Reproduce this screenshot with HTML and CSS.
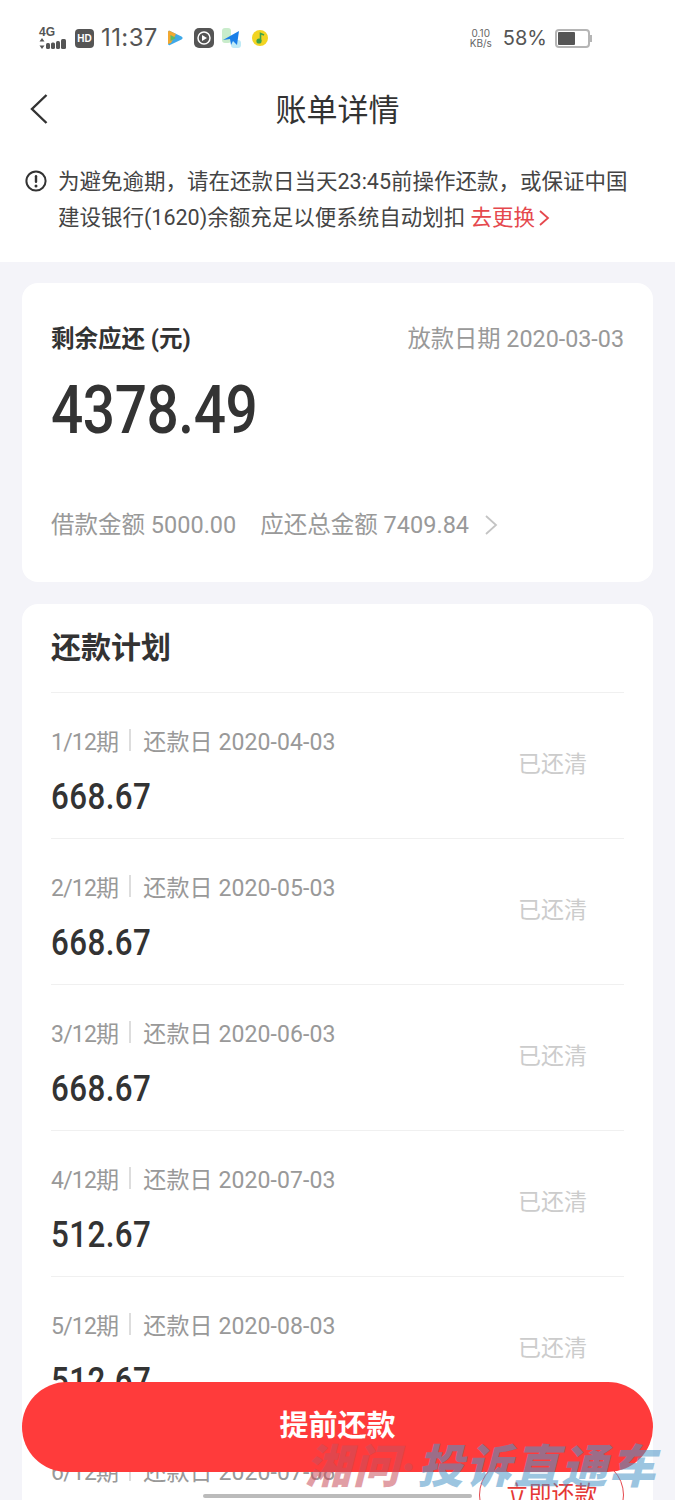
FILE: index.html
```html
<!DOCTYPE html>
<html lang="zh-CN">
<head>
<meta charset="utf-8">
<title>账单详情</title>
<link rel="stylesheet" href="styles.css">
</head>
<body>
<div class="page">
  <div class="top">
    <div class="status">
      <div class="status-left">
        <div class="signal">
          <span class="net">4G</span>
          <svg class="bars" width="30" height="11" viewBox="0 0 30 11"><path d="M3 0l2.500 3.500h-5zM3 11 .5 7.500h5z" fill="#555"/><rect x="7" y="5" width="4" height="6" rx="1.500" fill="#555"/><rect x="12" y="4.500" width="4" height="6.500" rx="1.500" fill="#555"/><rect x="17" y="3" width="4" height="8" rx="1.500" fill="#555"/><rect x="22" y="1" width="5" height="10" rx="1.500" fill="#555"/></svg>
        </div>
        <span class="hd">HD</span>
        <span class="time">11:37</span>
        <svg class="app a1" width="16" height="16" viewBox="0 0 16 16"><path d="M1 2.500C1 1 2 .5 3 1l11.500 5.500c1.500.8 1.500 2.200 0 3L3 15c-1 .5-2 0-2-1.500z" fill="#3fa9e8"/><path d="M1 2.500C1 1 2 .5 3 1l6 3-5 9-3 1z" fill="#f2a830"/><path d="M3.500 5 9 8l-5.500 3z" fill="#5dbb63"/></svg>
        <svg class="app a2" width="20" height="20" viewBox="0 0 20 20"><rect width="20" height="20" rx="5" fill="#555"/><circle cx="10" cy="10" r="6" fill="none" stroke="#fff" stroke-width="1.500"/><path d="M8 7l5 3-5 3z" fill="#fff"/></svg>
        <svg class="app a3" width="20" height="20" viewBox="0 0 20 20"><rect x="0" y="0" width="9" height="15" rx="3" fill="#c9eccb"/><rect x="9" y="12" width="10" height="8" rx="3" fill="#bfeaf6"/><path d="M1 12 17 3l-2 14-4-4-2 4-1-6z" fill="#1a7fe8"/></svg>
        <svg class="app a4" width="16" height="16" viewBox="0 0 16 16"><circle cx="8" cy="8" r="8" fill="#f2d422"/><circle cx="7" cy="11" r="2.600" fill="#3fa34d"/><path d="M8.500 11V3.500l3.500 1.500" fill="none" stroke="#3fa34d" stroke-width="1.600"/></svg>
      </div>
      <div class="status-right">
        <div class="speed"><span>0.10</span><span>KB/s</span></div>
        <span class="pct">58%</span>
        <div class="battery"><div class="battery-fill"></div></div>
      </div>
    </div>
    <div class="nav">
      <svg class="back" width="20" height="32" viewBox="0 0 20 32"><path d="M17.500 2 3 16l14.500 14" fill="none" stroke="#333" stroke-width="2.400"/></svg>
      <h1 class="title">账单详情</h1>
    </div>
    <div class="notice">
      <svg class="notice-icon" width="24" height="24" viewBox="0 0 24 24"><circle cx="12" cy="12" r="9.600" fill="none" stroke="#333" stroke-width="2"/><rect x="10.800" y="6" width="2.400" height="8" rx="1.200" fill="#333"/><circle cx="12" cy="17" r="1.500" fill="#333"/></svg>
      <p class="notice-text">为避免逾期，请在还款日当天23:45前操作还款，或保证中国建设银行(1620)余额充足以便系统自动划扣 <span class="link">去更换<svg class="link-arrow" width="12" height="18" viewBox="0 0 12 18"><path d="M2 2l8 7-8 7" fill="none" stroke="#e5484d" stroke-width="1.800"/></svg></span></p>
    </div>
  </div>

  <div class="content">
    <section class="card summary">
      <div class="summary-head">
        <span class="remain">剩余应还 (元)</span>
        <span class="date">放款日期 2020-03-03</span>
      </div>
      <div class="amount">4378.49</div>
      <div class="summary-foot">
        <span>借款金额 5000.00</span>
        <span>应还总金额 7409.84</span>
        <svg class="foot-arrow" width="14" height="22" viewBox="0 0 14 22"><path d="M2 2l10 9-10 9" fill="none" stroke="#c4c4c4" stroke-width="1.800"/></svg>
      </div>
    </section>

    <section class="card plan">
      <h2 class="plan-title">还款计划</h2>
      <div class="row">
        <div class="row-main"><div class="row-info"><span class="term">1/12期</span><i class="sep"></i><span>还款日 2020-04-03</span></div><div class="row-amount">668.67</div></div>
        <span class="paid">已还清</span>
      </div>
      <div class="row">
        <div class="row-main"><div class="row-info"><span class="term">2/12期</span><i class="sep"></i><span>还款日 2020-05-03</span></div><div class="row-amount">668.67</div></div>
        <span class="paid">已还清</span>
      </div>
      <div class="row">
        <div class="row-main"><div class="row-info"><span class="term">3/12期</span><i class="sep"></i><span>还款日 2020-06-03</span></div><div class="row-amount">668.67</div></div>
        <span class="paid">已还清</span>
      </div>
      <div class="row">
        <div class="row-main"><div class="row-info"><span class="term">4/12期</span><i class="sep"></i><span>还款日 2020-07-03</span></div><div class="row-amount">512.67</div></div>
        <span class="paid">已还清</span>
      </div>
      <div class="row">
        <div class="row-main"><div class="row-info"><span class="term">5/12期</span><i class="sep"></i><span>还款日 2020-08-03</span></div><div class="row-amount">512.67</div></div>
        <span class="paid">已还清</span>
      </div>
      <div class="row">
        <div class="row-main"><div class="row-info"><span class="term">6/12期</span><i class="sep"></i><span>还款日 2020-07-08</span></div></div>
        <span class="pay">立即还款</span>
      </div>
    </section>
  </div>

  <button class="prepay">提前还款</button>
  <div class="watermark"><span class="wm-red">湘问·</span><span class="wm-blue">投诉直通车</span></div>
  <div class="home-bar"></div>
</div>
</body>
</html>
```
FILE: styles.css
```css
* { box-sizing: border-box; }
html, body { margin: 0; padding: 0; }
body {
  width: 675px;
  height: 1500px;
  overflow: hidden;
  font-family: "Roboto", "Noto Sans CJK SC", sans-serif;
  color: #333;
  background: #f4f4f9;
}
.page { position: relative; width: 675px; height: 1500px; overflow: hidden; }
.top { background: #fff; height: 262px; }
.status {
  height: 76px;
  padding: 0 85px 0 39px;
  display: flex;
  justify-content: space-between;
  align-items: center;
}
.status-left, .status-right { display: flex; align-items: center; }
.signal { width: 31px; display: flex; flex-direction: column; align-items: flex-start; }
.net { font: 700 12px/11px "Liberation Sans", sans-serif; color: #555; }
.bars { display: block; margin-top: 0; }
.hd {
  margin-left: 5px;
  width: 19px; height: 19px;
  border-radius: 4px;
  background: #555; color: #fff;
  font: 700 10px/19px "Liberation Sans", sans-serif;
  text-align: center;
}
.time { margin-left: 7px; font: 400 24px/28px "Inter", sans-serif; letter-spacing: 0.4px; color: #555; }
.a1 { margin-left: 9px; }
.a2 { margin-left: 11px; }
.a3 { margin-left: 8px; }
.a4 { margin-left: 10px; }
.speed { display: flex; flex-direction: column; font: 400 10px/10px "Inter", sans-serif; color: #666; align-items: center; }
.pct { margin-left: 11px; font: 400 20px/24px "Inter", sans-serif; color: #555; }
.battery {
  position: relative;
  margin-left: 8px;
  width: 35px; height: 19px;
  border: 2px solid #b5b5b5;
  border-radius: 4px;
  padding: 1px;
  background: #fff;
}
.battery::after {
  content: "";
  position: absolute;
  right: -4px; top: 4px;
  width: 2px; height: 7px;
  background: #b5b5b5;
}
.battery-fill { width: 58%; height: 100%; background: #555; border-radius: 1px; }
.nav {
  position: relative;
  height: 69px;
  display: flex;
  align-items: center;
  justify-content: center;
}
.back { position: absolute; left: 29px; top: 17px; }
.title { margin: 0; font-size: 31px; font-weight: 400; line-height: 66px; color: #333; }
.notice { display: flex; padding: 19px 40px 0 24px; align-items: flex-start; }
.notice-icon { flex: none; margin-top: 5px; }
.notice-text {
  margin: 0 0 0 10px;
  font-size: 21.5px;
  line-height: 36px;
  color: #444;
}
.link { color: #e5484d; }
.link-arrow { vertical-align: -2px; margin-left: 3px; }
.content { padding: 21px 22px 0; display: flex; flex-direction: column; gap: 22px; }
.card { background: #fff; border-radius: 16px; padding: 0 29px; }
.summary { height: 299px; padding-top: 34px; }
.summary-head { display: flex; justify-content: space-between; align-items: center; height: 40px; }
.remain { font-size: 23.5px; font-weight: 700; color: #333; }
.date { font-size: 23.3px; color: #999; }
.amount {
  margin-top: 16px;
  font-size: 66px;
  line-height: 76px;
  font-weight: 500;
  color: #333;
  letter-spacing: -0.5px;
  transform: scaleX(0.86);
  transform-origin: left center;
}
.summary-foot { margin-top: 58px; display: flex; align-items: center; font-size: 23.5px; line-height: 36px; color: #999; gap: 24px; }
.foot-arrow { margin-left: -9px; }
.plan { height: 1000px; }
.plan-title { margin: 0; height: 88px; font-size: 30px; line-height: 88px; font-weight: 700; color: #333; }
.row {
  height: 146px;
  border-top: 1px solid #f0f0f0;
  display: flex;
  justify-content: space-between;
  align-items: flex-start;
}
.row-main { display: flex; flex-direction: column; }
.row-info { margin-top: 29px; display: flex; align-items: center; height: 36px; font-size: 23px; color: #999; letter-spacing: 0.1px; }
.term { letter-spacing: -0.8px; }
.sep { width: 2px; height: 22px; background: #ddd; margin: 0 12px 0 11px; }
.row-amount {
  margin-top: 17px;
  font-size: 36px;
  line-height: 44px;
  font-weight: 500;
  color: #333;
  letter-spacing: 0.5px;
  transform: scaleX(0.87);
  transform-origin: left center;
}
.paid { margin: 54px 37px 0 0; font-size: 23px; line-height: 36px; color: #ccc; }
.pay {
  margin: 36px 0 0 0;
  width: 145px; height: 72px;
  border: 1px solid #e5484d;
  border-radius: 36px;
  font-size: 23px;
  line-height: 70px;
  text-align: center;
  color: #e53935;
}
.prepay {
  position: absolute;
  left: 22px; top: 1382px;
  width: 631px; height: 90px;
  border: 0;
  border-radius: 45px;
  padding: 0 0 8px;
  background: #ff3b3b;
  color: #fff;
  font-family: inherit;
  font-size: 29px;
  font-weight: 700;
}
.watermark {
  position: absolute;
  left: 305px; top: 1439px;
  font-size: 46px;
  line-height: 56px;
  font-weight: 900;
  font-style: italic;
  white-space: nowrap;
  opacity: .55;
  letter-spacing: 2px;
}
.wm-red { color: #c9505c; }
.wm-blue { color: #4d96c8; }
.home-bar {
  position: absolute;
  left: 203px; top: 1494px;
  width: 269px; height: 4px;
  border-radius: 2px;
  background: #bbb;
}
```
